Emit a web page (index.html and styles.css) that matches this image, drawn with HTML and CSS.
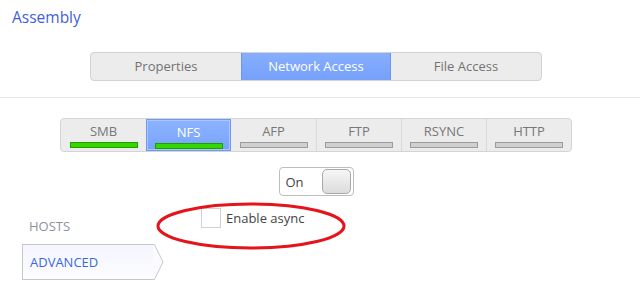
FILE: index.html
```html
<!DOCTYPE html>
<html>
<head>
<meta charset="utf-8">
<link rel="stylesheet" href="styles.css">
</head>
<body>
<div class="page">
  <h1 class="title">Assembly</h1>
  <div class="tabs-wrap">
    <nav class="tabs">
      <div class="tab">Properties</div>
      <div class="tab active">Network Access</div>
      <div class="tab">File Access</div>
    </nav>
  </div>
  <div class="divider"></div>
  <div class="proto-wrap">
    <div class="protos">
      <div class="proto"><span class="plabel">SMB</span><span class="bar on"></span></div>
      <div class="proto active"><span class="plabel">NFS</span><span class="bar on"></span></div>
      <div class="proto"><span class="plabel">AFP</span><span class="bar"></span></div>
      <div class="proto"><span class="plabel">FTP</span><span class="bar"></span></div>
      <div class="proto"><span class="plabel">RSYNC</span><span class="bar"></span></div>
      <div class="proto"><span class="plabel">HTTP</span><span class="bar"></span></div>
    </div>
  </div>
  <div class="toggle-wrap">
    <div class="toggle"><span class="tlabel">On</span><span class="knob"></span></div>
  </div>
  <div class="lower">
    <aside class="side">
      <div class="side-item">HOSTS</div>
      <div class="side-item current">ADVANCED
        <svg class="arrow" width="11" height="36" viewBox="0 0 11 36"><path d="M0 0.5 H1.5 L10 18 L1.5 35.5 H0" fill="#fbfbff" stroke="#c8c8cc" stroke-width="1"/></svg>
      </div>
    </aside>
    <section class="content">
      <label class="check-row"><span class="box"></span><span class="ctext">Enable async</span></label>
      <svg class="circle" width="192" height="50" viewBox="0 0 192 50"><ellipse cx="96" cy="25" rx="93" ry="22" fill="none" stroke="#e5141c" stroke-width="3"/></svg>
    </section>
  </div>
</div>
</body>
</html>
```
FILE: styles.css
```css
* { box-sizing: border-box; }
html, body { margin: 0; padding: 0; background: #fff; }
body { font-family: "Open Sans", "Noto Sans", "DejaVu Sans", sans-serif; font-size: 13px; color: #555; }
.page { width: 640px; height: 296px; overflow: hidden; padding-right: 8px; }
.title { margin: 0; padding: 5px 0 0 12px; height: 52px; font-size: 15.5px; font-weight: normal; color: #3f5fd8; line-height: 24px; }
.tabs-wrap { display: flex; justify-content: center; }
.tabs { display: flex; border: 1px solid #d2d2d2; border-radius: 4px; overflow: hidden; background: #ececec; }
.tab { width: 150px; height: 27px; line-height: 27px; text-align: center; color: #737373; font-size: 13px; }
.tab + .tab { border-left: 1px solid #d8d8d8; }
.tab.active { background: linear-gradient(#86aefe, #76a1fb); color: #fff; border-left: 1px solid #6b97ee; border-right: 1px solid #6b97ee; }
.tab.active + .tab { border-left: none; }
.divider { margin-top: 16px; height: 1px; background: #e8e8e8; margin-right: -8px; }
.proto-wrap { display: flex; justify-content: center; margin-top: 20px; }
.protos { display: flex; border: 1px solid #d4d4d4; border-radius: 4px; background: #ececec; overflow: hidden; }
.proto { width: 85px; height: 32px; display: flex; flex-direction: column; align-items: center; padding-top: 4px; }
.proto + .proto { border-left: 1px solid #dadada; }
.plabel { font-size: 13px; color: #777; line-height: 17px; height: 19px; }
.bar { width: 68px; height: 6px; background: #d0d0d0; border: 1px solid #9c9c9c; }
.bar.on { background: #33d800; border-color: #239c00; }
.proto.active { background: linear-gradient(#8cb3ff, #78a3fc); border: 1px solid #6d9af0; box-shadow: inset 0 0 0 1px #a9c6ff; }
.proto.active .plabel { color: #fff; }
.proto.active + .proto { border-left: none; }
.toggle-wrap { display: flex; justify-content: center; margin-top: 15px; }
.toggle { width: 75px; height: 29px; border: 1px solid #bdbdbd; border-radius: 4px; display: flex; align-items: center; justify-content: space-between; padding: 0 2px 0 6px; background: #fff; }
.tlabel { font-size: 13px; color: #444; }
.knob { width: 29px; height: 25px; border: 1px solid #a8a8a8; border-radius: 5px; background: linear-gradient(#f6f6f6, #dcdcdc); }
.lower { display: grid; grid-template-columns: 201px 1fr; margin-top: 12px; }
.side { padding-left: 22px; padding-top: 9px; }
.side-item { font-size: 13px; color: #8a929e; padding-left: 7px; height: 18px; line-height: 18px; }
.side-item.current { position: relative; margin-top: 9px; width: 131px; height: 36px; line-height: 34px; color: #3a68dc; border: 1px solid #c8c8cc; border-right: none; background: linear-gradient(#f4f5ff, #fdfdff); }
.arrow { position: absolute; left: 130px; top: -1px; }
.content { position: relative; }
.check-row { display: flex; align-items: center; gap: 5px; height: 20px; }
.box { width: 20px; height: 20px; border: 1px solid #d0d0d0; background: #fff; }
.ctext { font-size: 13px; color: #444; }
.circle { position: absolute; left: -46px; top: -7px; }
```
